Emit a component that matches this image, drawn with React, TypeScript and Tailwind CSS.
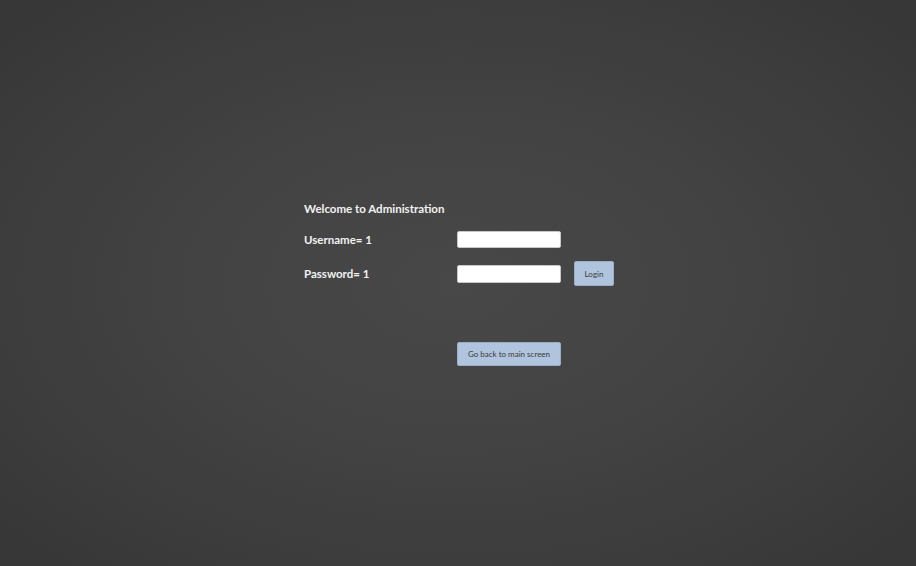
export default function App() {
  return (
    <div className="h-[566px] w-full overflow-hidden bg-[radial-gradient(ellipse_at_center,#484848_0%,#424242_45%,#363636_100%)] font-['Lato',sans-serif]">
      <div className="pl-[304px] pt-[201px]">
        <h1 className="h-[16px] text-[11.5px] font-bold leading-[16px] text-[#f2f2f2]">
          Welcome to Administration
        </h1>

        <div className="mt-[14px] flex h-[17px] items-center">
          <span className="w-[153px] text-[11.5px] font-bold text-[#f2f2f2]">Username= 1</span>
          <input
            className="h-[17px] w-[104px] rounded-[2px] border border-[#c8c8c8] bg-white outline-none"
            type="text"
          />
        </div>

        <div className="mt-[13px] flex h-[25px] items-center">
          <span className="w-[153px] text-[11.5px] font-bold text-[#f2f2f2]">Password= 1</span>
          <input
            className="h-[18px] w-[104px] rounded-[2px] border border-[#c8c8c8] bg-white outline-none"
            type="password"
          />
          <button
            className="ml-[13px] h-[25px] w-[40px] rounded-[2px] border border-[#9aaec8] bg-[#b0c4de] text-[8px] text-[#3a3a3a]"
            type="button"
          >
            Login
          </button>
        </div>

        <div className="mt-[53px] pl-[153px]">
          <button
            className="h-[24px] w-[104px] rounded-[2px] border border-[#9aaec8] bg-[#b0c4de] text-[8px] text-[#3a3a3a]"
            type="button"
          >
            Go back to main screen
          </button>
        </div>
      </div>
    </div>
  );
}
